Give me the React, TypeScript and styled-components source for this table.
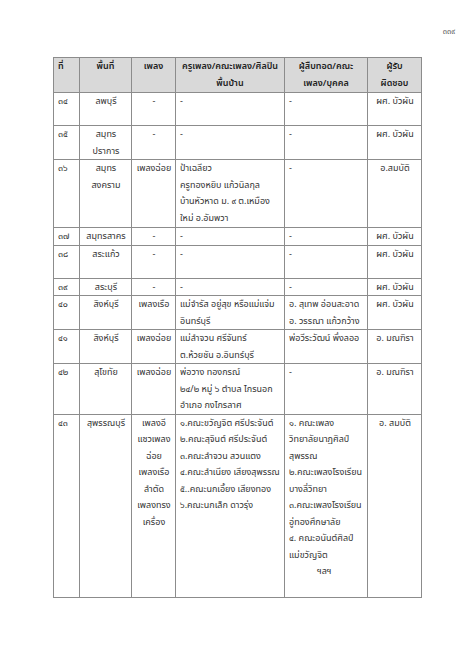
import styled, { createGlobalStyle } from "styled-components";

const GlobalStyle = createGlobalStyle`
  html, body {
    margin: 0;
    padding: 0;
    background: #ffffff;
  }
`;

type Row = {
  no: string;
  area: string[];
  song: string[];
  artist: string[];
  heir: string[];
  owner: string;
  height: number;
};

const rows: Row[] = [
  { no: "๓๔", area: ["ลพบุรี"], song: ["-"], artist: ["-"], heir: ["-"], owner: "ผศ. บัวผัน", height: 33 },
  { no: "๓๕", area: ["สมุทร", "ปราการ"], song: ["-"], artist: ["-"], heir: ["-"], owner: "ผศ. บัวผัน", height: 34 },
  {
    no: "๓๖",
    area: ["สมุทร", "สงคราม"],
    song: ["เพลงฉ่อย"],
    artist: ["ป้าเฉลียว", "ครูทองหยิบ แก้วนิลกุล", "บ้านหัวหาด ม. ๙ ต.เหมือง", "ใหม่ อ.อัมพวา"],
    heir: ["-"],
    owner: "อ.สมบัติ",
    height: 68,
  },
  { no: "๓๗", area: ["สมุทรสาคร"], song: ["-"], artist: ["-"], heir: ["-"], owner: "ผศ. บัวผัน", height: 17 },
  { no: "๓๘", area: ["สระแก้ว"], song: ["-"], artist: ["-"], heir: ["-"], owner: "ผศ. บัวผัน", height: 33 },
  { no: "๓๙", area: ["สระบุรี"], song: ["-"], artist: ["-"], heir: ["-"], owner: "ผศ. บัวผัน", height: 16 },
  {
    no: "๔๐",
    area: ["สิงห์บุรี"],
    song: ["เพลงเรือ"],
    artist: ["แม่จำรัส อยู่สุข หรือแม่แจ่ม", "อินทร์บุรี"],
    heir: ["อ. สุเทพ อ่อนสะอาด", "อ. วรรณา แก้วกว้าง"],
    owner: "ผศ. บัวผัน",
    height: 33,
  },
  {
    no: "๔๑",
    area: ["สิงห์บุรี"],
    song: ["เพลงฉ่อย"],
    artist: ["แม่ลำจวน ศรีจันทร์", "ต.ห้วยชัน อ.อินทร์บุรี"],
    heir: ["พ่อวีระวัฒน์ พึ่งลออ"],
    owner: "อ. มณฑิรา",
    height: 33,
  },
  {
    no: "๔๒",
    area: ["สุโขทัย"],
    song: ["เพลงฉ่อย"],
    artist: ["พ่อวาง ทองกรณ์", "๒๔/๒ หมู่ ๖ ตำบล ไกรนอก", "อำเภอ กงไกรลาศ"],
    heir: ["-"],
    owner: "อ. มณฑิรา",
    height: 50,
  },
  {
    no: "๔๓",
    area: ["สุพรรณบุรี"],
    song: ["เพลงอี", "แซวเพลง", "ฉ่อย", "เพลงเรือ", "ลำตัด", "เพลงทรง", "เครื่อง"],
    artist: [
      "๑.คณะขวัญจิต ศรีประจันต์",
      "๒.คณะสุจินต์ ศรีประจันต์",
      "๓.คณะลำจวน สวนแตง",
      "๔.คณะลำเนียง เสียงสุพรรณ",
      "๕..คณะนกเอี้ยง เสียงทอง",
      "๖.คณะนกเล็ก ดาวรุ่ง",
    ],
    heir: [
      "๑. คณะเพลง",
      "วิทยาลัยนาฏศิลป์",
      "สุพรรณ",
      "๒.คณะเพลงโรงเรียน",
      "บางลี่วิทยา",
      "๓.คณะเพลงโรงเรียน",
      "อู่ทองศึกษาลัย",
      "๔. คณะอนันต์ศิลป์",
      "แม่ขวัญจิต",
    ],
    owner: "อ. สมบัติ",
    height: 183,
  },
];

function Lines({ items }: { items: string[] }) {
  return (
    <>
      {items.map((t, i) => (
        <Line key={i}>{t}</Line>
      ))}
    </>
  );
}

export default function App() {
  return (
    <Page>
      <GlobalStyle />
      <PageNo>๓๓๙</PageNo>
      <Table>
        <colgroup>
          <col style={{ width: 26 }} />
          <col style={{ width: 52 }} />
          <col style={{ width: 44 }} />
          <col style={{ width: 109 }} />
          <col style={{ width: 83 }} />
          <col style={{ width: 54 }} />
        </colgroup>
        <thead>
          <tr>
            <Th $align="left">ที่</Th>
            <Th>พื้นที่</Th>
            <Th>เพลง</Th>
            <Th>
              <Line>ครูเพลง/คณะเพลง/ศิลปิน</Line>
              <Line>พื้นบ้าน</Line>
            </Th>
            <Th>
              <Line>ผู้สืบทอด/คณะ</Line>
              <Line>เพลง/บุคคล</Line>
            </Th>
            <Th>
              <Line>ผู้รับ</Line>
              <Line>ผิดชอบ</Line>
            </Th>
          </tr>
        </thead>
        <tbody>
          {rows.map((r) => (
            <tr key={r.no}>
              <Td $align="left" $h={r.height}>
                {r.no}
              </Td>
              <Td $h={r.height}>
                <Lines items={r.area} />
              </Td>
              <Td $h={r.height}>
                <Lines items={r.song} />
              </Td>
              <Td $align="left" $h={r.height}>
                <Lines items={r.artist} />
              </Td>
              <Td $align="left" $h={r.height}>
                <Lines items={r.heir} />
                {r.no === "๔๓" && <Etc>ฯลฯ</Etc>}
              </Td>
              <Td $h={r.height}>{r.owner}</Td>
            </tr>
          ))}
        </tbody>
      </Table>
    </Page>
  );
}

const Page = styled.div`
  width: 474px;
  height: 670px;
  box-sizing: border-box;
  padding: 26px 0 0 53px;
  background: #ffffff;
  color: #333333;
  font-family: "Noto Sans Thai", "Noto Sans", "DejaVu Sans", sans-serif;
  font-size: 9px;
  overflow: hidden;
`;

const PageNo = styled.div`
  width: 402px;
  text-align: right;
  font-size: 7.5px;
  line-height: 12px;
  color: #555;
  margin-bottom: 19px;
`;

const Table = styled.table`
  border-collapse: collapse;
  table-layout: fixed;
  width: 368px;
`;

const Th = styled.th<{ $align?: string }>`
  background: #d9d9d9;
  border: 1px solid #8c8c8c;
  padding: 0 4px;
  height: 34px;
  font-weight: 600;
  color: #222;
  text-align: ${(p) => p.$align || "center"};
  vertical-align: top;
  line-height: 16.5px;
  white-space: nowrap;
`;

const Td = styled.td<{ $align?: string; $h: number }>`
  border: 1px solid #8c8c8c;
  padding: 0 3px 0 4px;
  height: ${(p) => p.$h}px;
  box-sizing: border-box;
  text-align: ${(p) => p.$align || "center"};
  vertical-align: top;
  line-height: 16.5px;
  white-space: nowrap;
  overflow: hidden;
`;

const Line = styled.div``;

const Etc = styled.div`
  padding-left: 28px;
`;
